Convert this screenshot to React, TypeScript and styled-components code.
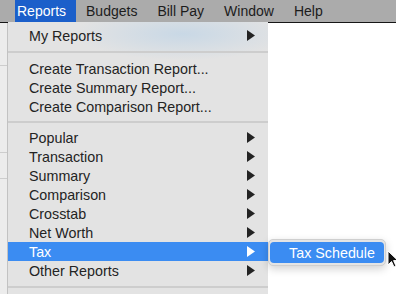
import React, { FC } from 'react';
import styled, { createGlobalStyle } from 'styled-components';

const GlobalStyle = createGlobalStyle`
    html, body {
        margin: 0;
        padding: 0;
        background: #ffffff;
        overflow: hidden;
    }
    body {
        font-family: "Liberation Sans", Arial, sans-serif;
    }
`;

interface MenuEntry {
    label: string;
    submenu?: boolean;
    selected?: boolean;
}

const topItems = ['Reports', 'Budgets', 'Bill Pay', 'Window', 'Help'];

const createItems: Array<MenuEntry> = [
    { label: 'Create Transaction Report...' },
    { label: 'Create Summary Report...' },
    { label: 'Create Comparison Report...' },
];

const reportItems: Array<MenuEntry> = [
    { label: 'Popular', submenu: true },
    { label: 'Transaction', submenu: true },
    { label: 'Summary', submenu: true },
    { label: 'Comparison', submenu: true },
    { label: 'Crosstab', submenu: true },
    { label: 'Net Worth', submenu: true },
    { label: 'Tax', submenu: true, selected: true },
    { label: 'Other Reports', submenu: true },
];

const Arrow: FC = () => (
    <ArrowSvg width="8" height="11" viewBox="0 0 8 11">
        <path d="M0 0 L8 5.5 L0 11 Z" fill="currentColor" />
    </ArrowSvg>
);

const Row: FC<{ item: MenuEntry }> = ({ item }) => (
    <MenuRow $selected={!!item.selected}>
        <span>{item.label}</span>
        {item.submenu && <Arrow />}
    </MenuRow>
);

const App: FC = () => {
    return (
        <Screen>
            <GlobalStyle />
            <MenuBar>
                {topItems.map((label, index) => (
                    <BarItem key={label} $active={index === 0}>{label}</BarItem>
                ))}
            </MenuBar>
            <Content>
                <LeftStrip />
                <Panel>
                    <Row item={{ label: 'My Reports', submenu: true }} />
                    <Separator $space={6} />
                    {createItems.map((item) => <Row key={item.label} item={item} />)}
                    <Separator $space={5} />
                    {reportItems.map((item) => <Row key={item.label} item={item} />)}
                    <Separator $space={6} />
                </Panel>
                <Desk />
            </Content>
            <Submenu>
                <SubmenuItem>Tax Schedule</SubmenuItem>
            </Submenu>
            <Cursor width="12" height="18" viewBox="0 0 12 18">
                <path d="M1 1 L1 15 L4.5 11.5 L7 17 L9 16 L6.6 10.6 L11 10.6 Z" fill="#111" stroke="#fff" strokeWidth="1" strokeLinejoin="round" />
            </Cursor>
        </Screen>
    );
};

const Screen = styled.div`
    position: relative;
    width: 396px;
    height: 294px;
    overflow: hidden;
    display: flex;
    flex-direction: column;
    background: #ffffff;
`;

const MenuBar = styled.div`
    height: 22px;
    flex-shrink: 0;
    display: flex;
    align-items: stretch;
    padding-left: 15px;
    background: #ababab;
    border-bottom: 1px solid #161616;
`;

const BarItem = styled.div<{ $active: boolean }>`
    display: flex;
    align-items: center;
    padding: 0 10px;
    font-size: 14px;
    color: ${(p) => (p.$active ? '#ffffff' : '#1c1c1c')};
    background: ${(p) => (p.$active ? '#1b5fca' : 'transparent')};
    &:first-child {
        padding-left: 2px;
    }
`;

const Content = styled.div`
    flex: 1;
    display: flex;
    min-height: 0;
`;

const LeftStrip = styled.div`
    width: 7px;
    flex-shrink: 0;
    border-right: 1px solid #c2c2c2;
    background:
        linear-gradient(#cdcdcd, #cdcdcd) 0 42px / 100% 1px no-repeat,
        linear-gradient(#cdcdcd, #cdcdcd) 0 129px / 100% 1px no-repeat,
        linear-gradient(#cdcdcd, #cdcdcd) 0 155px / 100% 1px no-repeat,
        #ececec;
`;

const Panel = styled.div`
    width: 260px;
    flex-shrink: 0;
    margin-top: -1px;
    padding-top: 4px;
    display: flex;
    flex-direction: column;
    background:
        radial-gradient(ellipse 110px 26px at 175px 12px, rgba(196, 214, 230, 0.85), rgba(196, 214, 230, 0)),
        #e3e3e3;
`;

const MenuRow = styled.div<{ $selected: boolean }>`
    height: 19px;
    flex-shrink: 0;
    display: flex;
    align-items: center;
    justify-content: space-between;
    padding: 0 13px 0 21px;
    font-size: 14.3px;
    color: ${(p) => (p.$selected ? '#ffffff' : '#232323')};
    background: ${(p) => (p.$selected ? '#3b8cf2' : 'transparent')};
`;

const ArrowSvg = styled.svg`
    display: block;
    color: inherit;
    fill: currentColor;
`;

const Separator = styled.div<{ $space: number }>`
    flex-shrink: 0;
    height: 2px;
    margin: ${(p) => p.$space}px 0;
    background: #cdcdcd;
`;

const Desk = styled.div`
    flex: 1;
    background: #ffffff;
`;

const Submenu = styled.div`
    position: absolute;
    left: 268px;
    top: 239px;
    width: 118px;
    height: 27px;
    box-sizing: border-box;
    padding: 2px 1px;
    border-radius: 5px;
    background: #e4e4e4;
    border: 1px solid #cfcfcf;
    box-shadow: 0 3px 8px rgba(0, 0, 0, 0.18);
    display: flex;
`;

const SubmenuItem = styled.div`
    flex: 1;
    display: flex;
    align-items: center;
    justify-content: center;
    border-radius: 4px;
    background: #3b8cf2;
    color: #ffffff;
    font-size: 14.3px;
    padding-left: 10px;
`;

const Cursor = styled.svg`
    position: absolute;
    left: 387px;
    top: 250px;
`;

export default App;
